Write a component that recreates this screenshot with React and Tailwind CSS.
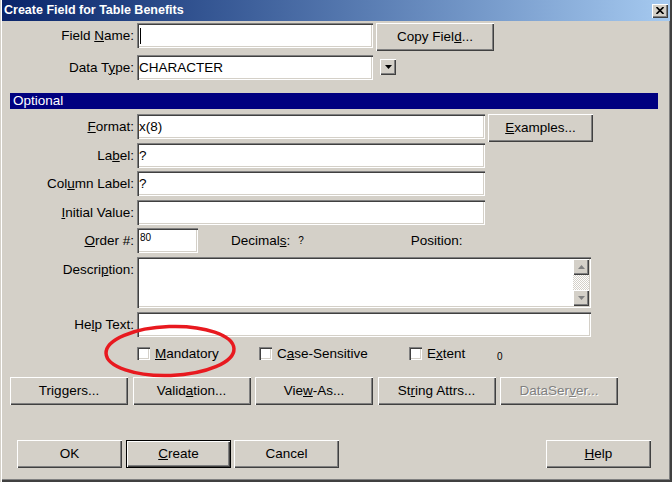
const sunken =
  "bg-white shadow-[inset_1px_1px_#808080,inset_2px_2px_#404040,inset_-1px_-1px_#ffffff,inset_-2px_-2px_#d4d0c8]";
const raised =
  "bg-[#d4d0c8] shadow-[inset_1px_1px_#ffffff,inset_-1px_-1px_#404040,inset_-2px_-2px_#808080]";

function Label({ children, className = "h-[25px] items-center" }) {
  return (
    <div className={`w-[135px] shrink-0 flex justify-end pr-[3px] ${className}`}>
      <span>{children}</span>
    </div>
  );
}

function Btn({ children, className = "", disabled = false }) {
  return (
    <div
      className={`h-[28px] flex items-center justify-center shrink-0 ${raised} ${
        disabled ? "text-[#808080] [text-shadow:1px_1px_#ffffff]" : ""
      } ${className}`}
    >
      {children}
    </div>
  );
}

function Check({ children }) {
  return (
    <div className="flex items-center">
      <div className={`w-[13px] h-[13px] shrink-0 ${sunken}`} />
      <span className="ml-[5px]">{children}</span>
    </div>
  );
}

function Arrow({ up }) {
  return (
    <svg width="7" height="4" viewBox="0 0 7 4">
      <polygon points={up ? "3.5,0 7,4 0,4" : "0,0 7,0 3.5,4"} fill="#808080" />
    </svg>
  );
}

export default function App() {
  return (
    <div className="relative w-[672px] h-[482px] overflow-hidden bg-[#d4d0c8] px-[2px] text-[13.5px] leading-none text-black font-['Liberation_Sans',Arial,sans-serif] shadow-[inset_1px_0_#d4d0c8,inset_2px_0_#ffffff,inset_-2px_-2px_#404040,inset_-3px_-3px_#808080]">
      {/* title bar */}
      <div className="h-[21px] flex items-center justify-between pl-[2px] pr-[2px] bg-linear-to-r from-[#0a246a] to-[#a6caf0]">
        <span className="text-white font-bold text-[12.5px]">Create Field for Table Benefits</span>
        <div className={`w-[16px] h-[14px] flex items-center justify-center ${raised}`}>
          <svg width="8" height="7" viewBox="0 0 8 7">
            <path d="M0.5 0 L7.5 7 M7.5 0 L0.5 7" stroke="#000" strokeWidth="1.6" />
          </svg>
        </div>
      </div>

      {/* field name */}
      <div className="flex items-start mt-[2px]">
        <Label>
          Field <u>N</u>ame:
        </Label>
        <div className={`w-[236px] h-[25px] flex items-center pl-[3px] ${sunken}`}>
          <div className="w-[1px] h-[16px] bg-black" />
        </div>
        <Btn className="ml-[3px] w-[118px]">
          Copy Fiel<u>d</u>...
        </Btn>
      </div>

      {/* data type */}
      <div className="flex items-start mt-[4px]">
        <Label>
          Data T<u>y</u>pe:
        </Label>
        <div className={`w-[236px] h-[25px] flex items-center pl-[2px] ${sunken}`}>CHARACTER</div>
        <div className={`ml-[7px] mt-[4px] w-[16px] h-[16px] flex items-center justify-center ${raised}`}>
          <svg width="7" height="4" viewBox="0 0 7 4">
            <polygon points="0,0 7,0 3.5,4" fill="#000" />
          </svg>
        </div>
      </div>

      {/* optional header */}
      <div className="mt-[13px] ml-[8px] w-[648px] h-[16px] flex items-center pl-[3px] bg-[#000080] text-white">
        Optional
      </div>

      <div className="flex items-start mt-[5px]">
        <Label>
          <u>F</u>ormat:
        </Label>
        <div className={`w-[348px] h-[25px] flex items-center pl-[2px] ${sunken}`}>x(8)</div>
        <Btn className="ml-[3px] w-[105px]">
          <u>E</u>xamples...
        </Btn>
      </div>

      <div className="flex items-start mt-[1px]">
        <Label>
          La<u>b</u>el:
        </Label>
        <div className={`w-[348px] h-[25px] flex items-center pl-[2px] ${sunken}`}>?</div>
      </div>

      <div className="flex items-start mt-[3px]">
        <Label>
          Col<u>u</u>mn Label:
        </Label>
        <div className={`w-[348px] h-[25px] flex items-center pl-[2px] ${sunken}`}>?</div>
      </div>

      <div className="flex items-start mt-[4px]">
        <Label>
          <u>I</u>nitial Value:
        </Label>
        <div className={`w-[348px] h-[25px] ${sunken}`} />
      </div>

      <div className="flex items-start mt-[3px]">
        <Label>
          <u>O</u>rder #:
        </Label>
        <div className={`w-[61px] h-[25px] pl-[3px] pt-[5px] text-[10px] ${sunken}`}>80</div>
        <div className="h-[25px] flex items-center ml-[33px]">
          Decimal<u>s</u>:<span className="ml-[8px] text-[10px]">?</span>
        </div>
        <div className="h-[25px] flex items-center ml-[107px]">Position:</div>
      </div>

      <div className="flex items-start mt-[4px]">
        <Label className="h-[51px] items-start pt-[6px]">
          Descri<u>p</u>tion:
        </Label>
        <div className={`w-[454px] h-[51px] flex p-[2px] ${sunken}`}>
          <div className="flex-1" />
          <div className="w-[16px] flex flex-col">
            <div className={`h-[16px] flex items-center justify-center ${raised}`}>
              <Arrow up />
            </div>
            <div className="flex-1 bg-[repeating-conic-gradient(#ffffff_0_25%,#d4d0c8_0_50%)] bg-[length:2px_2px]" />
            <div className={`h-[16px] flex items-center justify-center ${raised}`}>
              <Arrow />
            </div>
          </div>
        </div>
      </div>

      <div className="flex items-start mt-[4px]">
        <Label>
          He<u>l</u>p Text:
        </Label>
        <div className={`w-[454px] h-[25px] ${sunken}`} />
      </div>

      {/* checkboxes */}
      <div className="flex items-center h-[13px] mt-[10px]">
        <div className="w-[135px] shrink-0" />
        <div className="w-[122px] shrink-0">
          <Check>
            <u>M</u>andatory
          </Check>
        </div>
        <div className="w-[150px] shrink-0">
          <Check>
            C<u>a</u>se-Sensitive
          </Check>
        </div>
        <div className="w-[88px] shrink-0">
          <Check>
            E<u>x</u>tent
          </Check>
        </div>
        <span className="text-[10px] mt-[7px]">0</span>
      </div>

      {/* action buttons */}
      <div className="flex items-start gap-[4.5px] ml-[8px] mt-[17px]">
        <Btn className="w-[118px]">
          Tri<u>g</u>gers...
        </Btn>
        <Btn className="w-[118px]">
          Valid<u>a</u>tion...
        </Btn>
        <Btn className="w-[118px]">
          Vie<u>w</u>-As...
        </Btn>
        <Btn className="w-[118px]">
          St<u>r</u>ing Attrs...
        </Btn>
        <Btn className="w-[118px]" disabled>
          DataSer<u>v</u>er...
        </Btn>
      </div>

      {/* dialog buttons */}
      <div className="flex items-start ml-[15px] mt-[35px]">
        <Btn className="w-[105px]">OK</Btn>
        <div className="ml-[4px] w-[105px] h-[28px] flex items-center justify-center bg-[#d4d0c8] shadow-[inset_0_0_0_1px_#000000,inset_2px_2px_#ffffff,inset_-2px_-2px_#404040,inset_-3px_-3px_#808080]">
          <span>
            <u>C</u>reate
          </span>
        </div>
        <Btn className="ml-[3px] w-[105px]">Cancel</Btn>
        <Btn className="ml-[207px] w-[105px]">
          <u>H</u>elp
        </Btn>
      </div>

      {/* red annotation */}
      <svg className="absolute left-[100px] top-[322px]" width="142" height="60" viewBox="0 0 142 60">
        <ellipse cx="70" cy="29" rx="64" ry="24.5" fill="none" stroke="#e8191f" strokeWidth="3.5" transform="rotate(-2 70 29)" />
      </svg>
    </div>
  );
}
